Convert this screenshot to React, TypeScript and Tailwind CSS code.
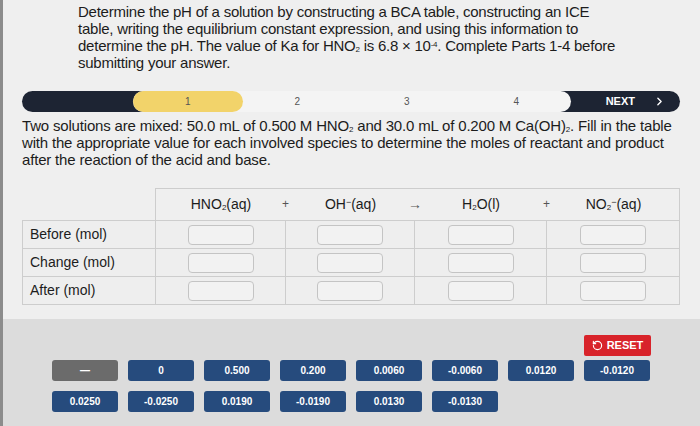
import React from 'react';
import { RotateCcw, ChevronRight } from 'lucide-react';

const rows = ['Before (mol)', 'Change (mol)', 'After (mol)'];

const chips: { label: string; grey?: boolean }[][] = [
  [
    { label: '—', grey: true },
    { label: '0' },
    { label: '0.500' },
    { label: '0.200' },
    { label: '0.0060' },
    { label: '-0.0060' },
    { label: '0.0120' },
    { label: '-0.0120' },
  ],
  [
    { label: '0.0250' },
    { label: '-0.0250' },
    { label: '0.0190' },
    { label: '-0.0190' },
    { label: '0.0130' },
    { label: '-0.0130' },
  ],
];

const Sub = ({ children }: { children: React.ReactNode }) => (
  <sub className="text-[8px] relative top-[1px]">{children}</sub>
);

const App: React.FC = () => {
  return (
    <div
      className="w-[700px] h-[426px] overflow-hidden bg-[#efefef] border-l-[3px] border-[#8c8c8c] flex flex-col text-[#1c1c1c]"
      style={{ fontFamily: '"Liberation Sans", Arial, sans-serif' }}
    >
      {/* intro text */}
      <div className="pl-[75px] pt-[3px] text-[15px] leading-[17px] tracking-[-0.24px]">
        <p>Determine the pH of a solution by constructing a BCA table, constructing an ICE</p>
        <p>table, writing the equilibrium constant expression, and using this information to</p>
        <p>
          determine the pH. The value of Ka for HNO<Sub>2</Sub> is 6.8 × 10<sup className="text-[8px]">-4</sup>. Complete Parts 1-4 before
        </p>
        <p>submitting your answer.</p>
      </div>

      {/* step bar */}
      <div className="mt-[20px] ml-[19px] w-[658px] h-[21px] rounded-full bg-[#1d2433] flex items-center">
        <div className="w-[111px]" />
        <div className="w-[438px] h-full rounded-full bg-[#f4f4f4] flex text-[10px] text-[#555]">
          <div className="flex-1 rounded-full bg-[#f2d36a] flex items-center justify-center">1</div>
          <div className="flex-1 flex items-center justify-center">2</div>
          <div className="flex-1 flex items-center justify-center">3</div>
          <div className="flex-1 flex items-center justify-center">4</div>
        </div>
        <div className="flex-1 flex items-center justify-end pr-[14px] text-white text-[11px] font-bold">
          <span className="mr-[18px]">NEXT</span>
          <ChevronRight size={13} strokeWidth={2.5} />
        </div>
      </div>

      {/* question */}
      <div className="mt-[5px] px-[19px] text-[15px] leading-[17px] tracking-[-0.18px]">
        <p>
          Two solutions are mixed: 50.0 mL of 0.500 M HNO<Sub>2</Sub> and 30.0 mL of 0.200 M Ca(OH)<Sub>2</Sub>. Fill in the table
        </p>
        <p>with the appropriate value for each involved species to determine the moles of reactant and product</p>
        <p>after the reaction of the acid and base.</p>
      </div>

      {/* BCA table */}
      <div className="mt-[20px] ml-[19px] w-[658px] grid grid-cols-[133px_130px_129px_132px_134px] text-[14px]">
        <div />
        <div className="col-span-4 h-[32px] border-t border-r border-l border-[#cdcdcd] grid grid-cols-[130px_129px_132px_133px] items-center relative">
          <div className="text-center">HNO<Sub>2</Sub>(aq)</div>
          <div className="text-center">
            OH<sup className="text-[9px]">−</sup>(aq)
          </div>
          <div className="text-center">H<Sub>2</Sub>O(l)</div>
          <div className="text-center">
            NO<Sub>2</Sub>
            <sup className="text-[9px]">−</sup>(aq)
          </div>
          <span className="absolute left-[126px] top-[6px] text-[12px] text-[#555]">+</span>
          <span className="absolute left-[252px] top-[5px] text-[14px] text-[#555]">→</span>
          <span className="absolute left-[387px] top-[6px] text-[12px] text-[#555]">+</span>
        </div>
        {rows.map((r) => (
          <React.Fragment key={r}>
            <div className="h-[28px] border-l border-t border-[#cdcdcd] flex items-center pl-[7px] bg-[#eeeeee]">{r}</div>
            {[0, 1, 2, 3].map((c) => (
              <div
                key={c}
                className={`h-[28px] border-t border-l border-[#cdcdcd] flex items-center justify-center bg-[#eeeeee] ${c === 3 ? 'border-r' : ''}`}
              >
                <div className="w-[66px] h-[20px] rounded-[4px] border border-[#c4c4c4] bg-[#f2f2f2]" />
              </div>
            ))}
          </React.Fragment>
        ))}
        <div className="col-span-5 border-t border-[#cdcdcd]" />
      </div>

      {/* answer chips */}
      <div className="mt-[14px] flex-1 bg-[#dcdcdc] pl-[49px] pt-[16px]">
        <div className="flex justify-end pr-[49px] h-[21px]">
          <button className="w-[67px] h-[21px] bg-[#d8232a] text-white text-[11px] font-bold flex items-center justify-center gap-[4px] rounded-[2px]">
            <RotateCcw size={11} strokeWidth={2.5} />
            RESET
          </button>
        </div>
        <div className="mt-[4px] flex flex-col gap-[10px]">
          {chips.map((row, i) => (
            <div key={i} className="flex gap-[10px]">
              {row.map((b) => (
                <div
                  key={b.label}
                  className={`w-[66px] h-[21px] rounded-[3px] flex items-center justify-center text-white text-[10px] font-bold ${
                    b.grey ? 'bg-[#6b6b6b]' : 'bg-[#264b7d]'
                  }`}
                >
                  {b.label}
                </div>
              ))}
            </div>
          ))}
        </div>
      </div>
    </div>
  );
};

export default App;
